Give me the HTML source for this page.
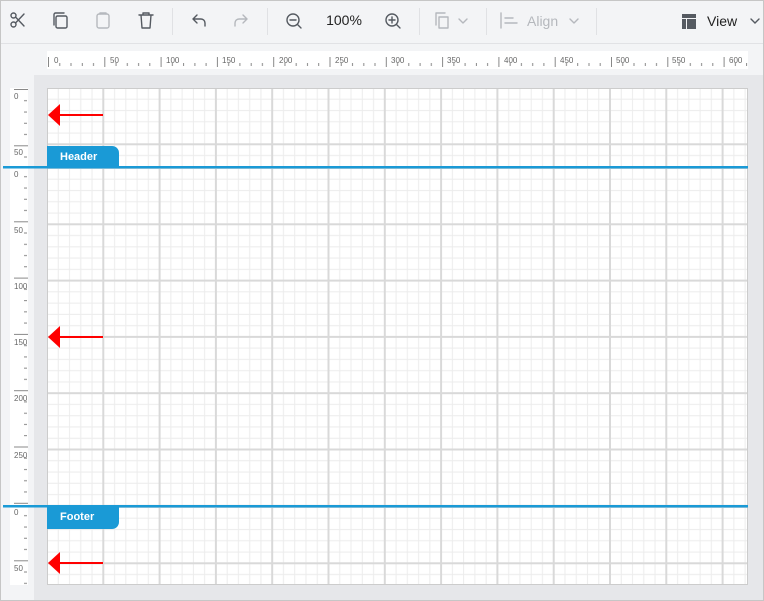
<!DOCTYPE html>
<html><head><meta charset="utf-8"><style>
html,body{margin:0;padding:0;}
body{width:764px;height:601px;overflow:hidden;background:#f3f4f6;font-family:"Liberation Sans",sans-serif;position:relative;}
svg{position:absolute;left:0;top:0;}
</style></head><body>
<svg width="764" height="601" viewBox="0 0 764 601" xmlns="http://www.w3.org/2000/svg" font-family="Liberation Sans, sans-serif">
<defs>
<pattern id="g1" patternUnits="userSpaceOnUse" x="46" y="87" width="56.3" height="56.3">
 <path d="M12.26 0V56.3M23.52 0V56.3M34.78 0V56.3M46.04 0V56.3M0 12.26H56.3M0 23.52H56.3M0 34.78H56.3M0 46.04H56.3" stroke="#ececec" stroke-width="1"/>
 <path d="M1 0V56.3M0 1H56.3" stroke="#d9d9d9" stroke-width="2"/>
</pattern>
<pattern id="g2" patternUnits="userSpaceOnUse" x="46" y="167" width="56.3" height="56.3">
 <path d="M12.26 0V56.3M23.52 0V56.3M34.78 0V56.3M46.04 0V56.3M0 12.26H56.3M0 23.52H56.3M0 34.78H56.3M0 46.04H56.3" stroke="#ececec" stroke-width="1"/>
 <path d="M1 0V56.3M0 1H56.3" stroke="#d9d9d9" stroke-width="2"/>
</pattern>
<pattern id="g3" patternUnits="userSpaceOnUse" x="46" y="506" width="56.3" height="56.3">
 <path d="M12.26 0V56.3M23.52 0V56.3M34.78 0V56.3M46.04 0V56.3M0 12.26H56.3M0 23.52H56.3M0 34.78H56.3M0 46.04H56.3" stroke="#ececec" stroke-width="1"/>
 <path d="M1 0V56.3M0 1H56.3" stroke="#d9d9d9" stroke-width="2"/>
</pattern>
<pattern id="rt" patternUnits="userSpaceOnUse" x="48" y="0" width="56.3" height="70">
 <path d="M0.5 57V67M11.76 63V66M23 63V66M34.3 63V66M45.5 63V66" stroke="#888" stroke-width="1"/>
</pattern>
<pattern id="rv1" patternUnits="userSpaceOnUse" x="0" y="89" width="30" height="56.3">
 <path d="M14 0.5H28M24 11.76H27M24 23H27M24 34.3H27M24 45.5H27" stroke="#888" stroke-width="1"/>
</pattern>
<pattern id="rv2" patternUnits="userSpaceOnUse" x="0" y="165" width="30" height="56.3">
 <path d="M14 0.5H28M24 11.76H27M24 23H27M24 34.3H27M24 45.5H27" stroke="#888" stroke-width="1"/>
</pattern>
<pattern id="rv3" patternUnits="userSpaceOnUse" x="0" y="504" width="30" height="56.3">
 <path d="M14 0.5H28M24 11.76H27M24 23H27M24 34.3H27M24 45.5H27" stroke="#888" stroke-width="1"/>
</pattern>
</defs>

<rect x="0" y="0" width="764" height="43" fill="#f3f4f6"/>
<line x1="0" y1="43.5" x2="764" y2="43.5" stroke="#e1e2e5"/>
<g fill="none" stroke="#555a61" stroke-width="1.4" stroke-linecap="round" stroke-linejoin="round">
 <circle cx="13.5" cy="24.5" r="2.5"/><circle cx="13.5" cy="15.5" r="2.5"/>
 <path d="M15.5 23L24 14M15.5 17L24 26"/>
 <rect x="56" y="16" width="11" height="12" rx="1.5"/>
 <path d="M54 25V14.5A1.5 1.5 0 0 1 55.5 13H64"/>
 <path d="M139 15H153M143 15V13H149V15M141 15L142 28H150L151 15"/>
 <path d="M197 15L193 19L197 23M193 19H201A4 4 0 0 1 205 23V26"/>
 <circle cx="293" cy="20" r="6"/><path d="M297.5 24.5L301 28M290 20H296"/>
 <circle cx="392" cy="20" r="6"/><path d="M396.5 24.5L400 28M389 20H395M392 17V23"/>
</g>
<g fill="none" stroke="#b5b8bd" stroke-width="1.4" stroke-linecap="round" stroke-linejoin="round">
 <rect x="97" y="14" width="12" height="14" rx="2"/>
 <path d="M100 14V13H106V14"/>
 <path d="M243 15L247 19L243 23M247 19H239A4 4 0 0 0 235 23V26"/>
 <rect x="439" y="17" width="9" height="11"/><path d="M436 25V13H445"/>
 <path d="M459 19L463 23L467 19"/>
 <path d="M501 13V28M505 18H513M505 23H517"/>
 <path d="M570 19L574 23L578 19"/>
</g>
<g stroke="#e0e1e4"><line x1="172.5" y1="8" x2="172.5" y2="35"/><line x1="267.5" y1="8" x2="267.5" y2="35"/><line x1="419.5" y1="8" x2="419.5" y2="35"/><line x1="486.5" y1="8" x2="486.5" y2="35"/><line x1="596.5" y1="8" x2="596.5" y2="35"/></g>
<text x="344" y="25" font-size="14" fill="#222" text-anchor="middle">100%</text>
<text x="527" y="26" font-size="14" fill="#b5b8bd">Align</text>
<rect x="682" y="14" width="14" height="4" fill="#555a61"/><rect x="682" y="19" width="4" height="10" fill="#555a61"/><rect x="687" y="19" width="9" height="10" fill="#555a61"/>
<text x="707" y="26" font-size="14" fill="#222">View</text>
<path d="M751 19L755 23L759 19" fill="none" stroke="#555a61" stroke-width="1.4" stroke-linecap="round"/>

<rect x="47" y="51" width="701" height="18" fill="#fff"/>
<rect x="47" y="51" width="701" height="18" fill="url(#rt)"/>
<g font-size="8" fill="#666">
<text x="54" y="63">0</text><text x="110" y="63">50</text><text x="166" y="63">100</text><text x="222" y="63">150</text><text x="279" y="63">200</text><text x="335" y="63">250</text><text x="391" y="63">300</text><text x="447" y="63">350</text><text x="504" y="63">400</text><text x="560" y="63">450</text><text x="616" y="63">500</text><text x="672" y="63">550</text><text x="729" y="63">600</text>
</g>

<rect x="34" y="75" width="730" height="526" fill="#e6e7ea"/>
<rect x="10" y="88" width="18" height="497" fill="#fff"/>
<rect x="10" y="88" width="18" height="78" fill="url(#rv1)"/>
<rect x="10" y="168" width="18" height="338" fill="url(#rv2)"/>
<rect x="10" y="507" width="18" height="78" fill="url(#rv3)"/>
<g font-size="8" fill="#666">
<text x="14" y="99">0</text><text x="14" y="155">50</text>
<text x="14" y="177">0</text><text x="14" y="233">50</text><text x="14" y="289">100</text><text x="14" y="345">150</text><text x="14" y="401">200</text><text x="14" y="458">250</text>
<text x="14" y="515">0</text><text x="14" y="571">50</text>
</g>

<rect x="47" y="88" width="701" height="497" fill="#fff"/>
<rect x="47" y="88" width="701" height="78" fill="url(#g1)"/>
<rect x="47" y="168" width="701" height="338" fill="url(#g2)"/>
<rect x="47" y="507" width="701" height="78" fill="url(#g3)"/>
<rect x="47.5" y="88.5" width="700" height="496" fill="none" stroke="#cccccc"/>

<rect x="3" y="166" width="745" height="2.5" fill="#1a9ad6"/>
<path d="M47 146H112A7 7 0 0 1 119 153V166H47Z" fill="#1a9ad6"/>
<text x="60" y="160" font-size="11" font-weight="bold" fill="#fff">Header</text>
<rect x="3" y="505" width="745" height="2.5" fill="#1a9ad6"/>
<path d="M47 507H119V522A7 7 0 0 1 112 529H47Z" fill="#1a9ad6"/>
<text x="60" y="520" font-size="11" font-weight="bold" fill="#fff">Footer</text>

<g fill="#f00">
<path d="M48 115L60 104V126Z"/><rect x="58" y="114" width="45" height="2"/>
<path d="M48 337L60 326V348Z"/><rect x="58" y="336" width="45" height="2"/>
<path d="M48 563L60 552V574Z"/><rect x="58" y="562" width="45" height="2"/>
</g>

<rect x="0.5" y="0.5" width="763" height="600" fill="none" stroke="#c6c6c6"/>
</svg>
</body></html>
